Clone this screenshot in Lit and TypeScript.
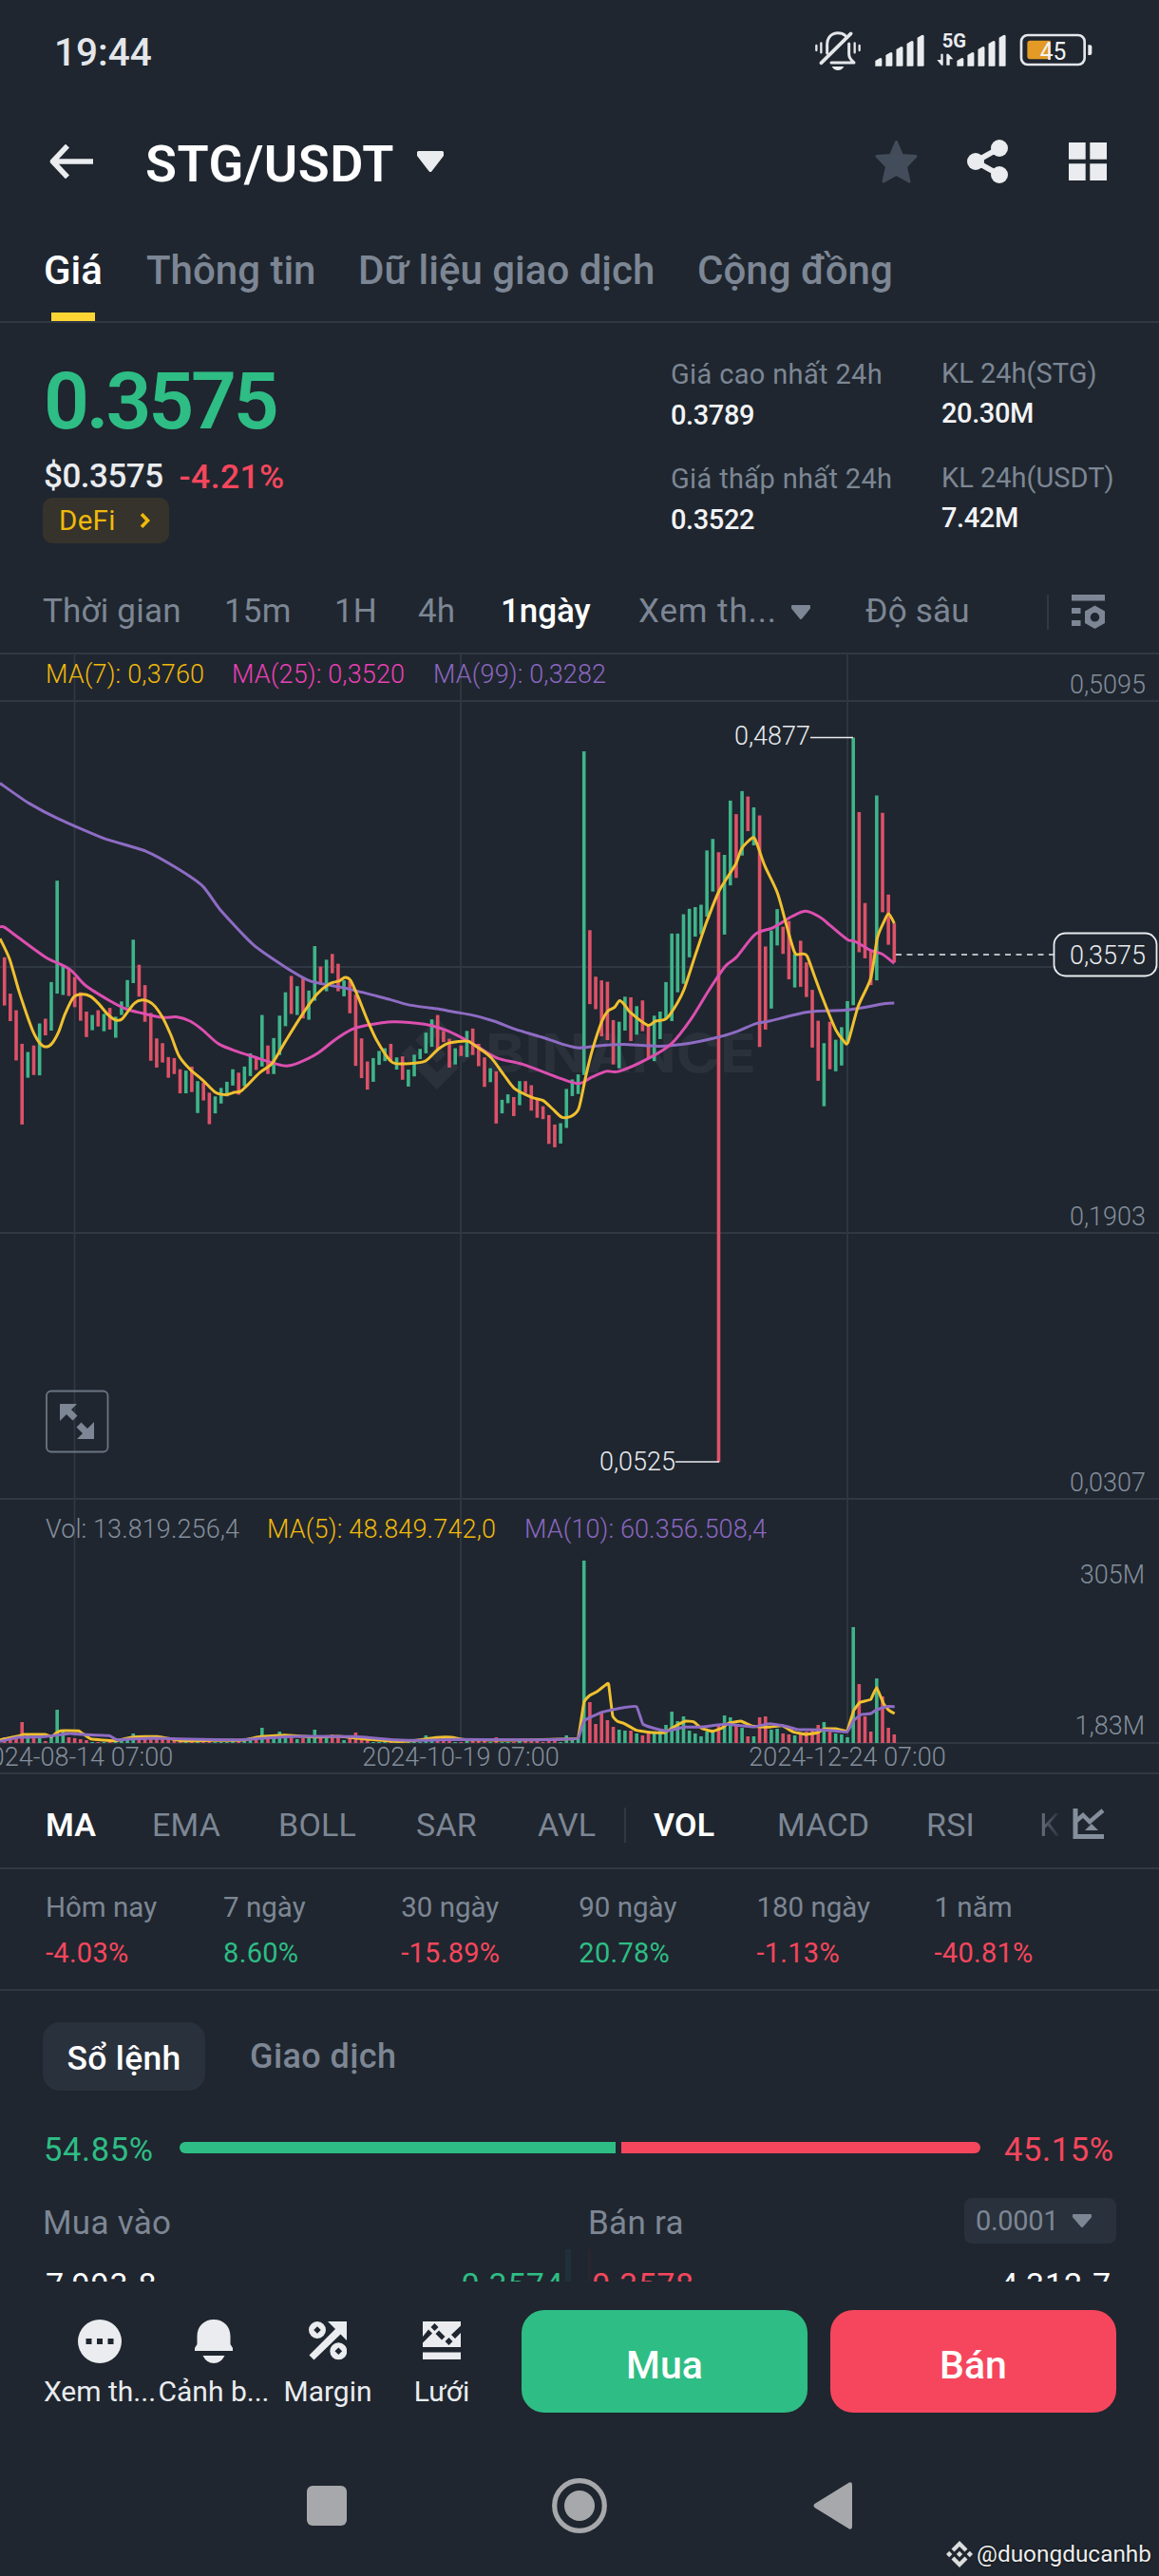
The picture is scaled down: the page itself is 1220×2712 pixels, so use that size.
import { LitElement, html, svg, css } from "lit";
import { customElement } from "lit/decorators.js";
import { classMap } from "lit/directives/class-map.js";

/* ---------- chart data ---------- */

// Price bars: direction, high, low (chart units, 2.8 per pixel from the top of the pane).
const BARS = `R890-1032 R997-1078 R1046-1194 R1145-1383 G1169-1245 R1150-1237 G1085-1238 R1071-1120 G963-1106 G664-997
G915-1001 R925-1004 R948-1037 R993-1077 R1050-1125 G1060-1105 R1046-1094 G1057-1108 R1039-1103 G1065-1127
G1020-1060 G957-1038 G838-966 R912-1006 R972-1080 R1054-1195 R1129-1215 R1143-1200 R1184-1245 R1187-1234
R1220-1291 G1224-1291 R1212-1287 G1255-1349 R1260-1312 R1289-1382 G1300-1350 G1275-1321 G1257-1300 G1220-1268
R1230-1295 G1212-1270 G1173-1240 R1184-1222 G1060-1212 R1150-1234 G1128-1234 G1062-1178 G993-1093 R945-1057
G975-1060 R950-1070 G988-1074 G857-1018 R917-970 G897-990 R880-937 R909-990 G958-1005 R960-1055
R1000-1210 R1129-1246 R1197-1280 G1187-1257 G1166-1207 G1158-1196 R1145-1198 G1185-1221 R1182-1251 G1221-1271
G1177-1241 G1160-1190 G1112-1173 G1073-1154 R1060-1160 R1107-1140 R1130-1215 G1158-1206 R1150-1181 G1107-1184
R1100-1178 R1145-1211 R1185-1272 G1217-1258 R1226-1380 G1310-1350 G1294-1320 R1302-1358 G1255-1326 R1255-1290
R1267-1342 R1305-1363 R1329-1367 R1355-1440 R1383-1450 G1379-1439 G1278-1393 G1250-1299 G1235-1293 G283-1237
R810-1028 R947-1043 R958-1123 R962-1134 R1075-1206 G1080-1217 G1006-1106 R1008-1137 G1034-1118 R1017-1108
R1090-1187 G1062-1196 G1050-1131 G963-1070 G820-1078 G820-993 G763-968 G747-890 G742-829 G735-822
G575-770 G541-696 R580-2378 G588-823 G428-678 R468-656 G400-590 R416-518 G448-560 R472-1154
R858-1103 G811-1041 G748-855 R800-880 R783-955 G880-979 R841-977 R905-1007 R986-1156 R1077-1254
G1143-1329 R1080-1220 G1133-1226 G1096-1209 G1019-1138 G242-1031 R462-875 R730-893 R870-972 G413-958
R464-757 R705-853 R790-905`
  .split(/\s+/)
  .map((s) => {
    const [hi, lo] = s.slice(1).split("-").map(Number);
    return { up: s[0] === "G", hi, lo };
  });

// Volume bar heights in pixels.
const VOLUME = [
  6, 5, 8, 22, 8, 7, 8, 2, 6, 35, 12, 6, 5, 4, 3, 1, 1, 1, 2, 3, 4, 6, 10, 6, 6, 7, 7, 6, 4, 3, 2, 1, 1, 3, 1, 3, 1, 1,
  1, 2, 3, 4, 6, 6, 16, 8, 8, 12, 9, 8, 4, 5, 8, 14, 8, 7, 9, 8, 3, 5, 11, 6, 6, 1, 1, 1, 1, 1, 1, 1, 1, 1, 8, 4, 7, 6,
  5, 1, 1, 3, 3, 3, 3, 1, 6, 1, 1, 1, 3, 2, 3, 2, 1, 3, 3, 1, 8, 5, 5, 192, 43, 20, 33, 24, 17, 14, 13, 13, 10, 8, 10,
  12, 13, 19, 33, 23, 28, 13, 10, 7, 12, 14, 18, 29, 27, 18, 16, 7, 7, 27, 28, 14, 15, 10, 9, 8, 10, 12, 13, 19, 22, 13,
  10, 9, 6, 122, 62, 28, 12, 68, 49, 16, 9,
];

const MA7 =
  "0,835 30,895 60,990 85,1060 105,1110 125,1142 145,1154 165,1143 185,1110 205,1058 232,1008 260,999 285,1005 310,1025 340,1058 365,1075 385,1072 405,1048 425,1025 445,1016 470,1020 490,1035 515,1070 540,1120 565,1180 600,1220 640,1252 680,1288 715,1295 740,1288 760,1285 780,1268 820,1230 860,1202 900,1140 950,1065 1000,1000 1040,968 1070,960 1090,949 1107,958 1130,1005 1160,1075 1190,1135 1235,1197 1270,1204 1310,1202 1345,1195 1385,1160 1420,1142 1475,1137 1500,1150 1550,1185 1590,1235 1625,1277 1680,1303 1715,1312 1745,1337 1775,1362 1805,1358 1828,1335 1850,1240 1870,1165 1900,1080 1920,1048 1940,1038 1957,1018 1975,1033 1990,1052 2045,1090 2070,1078 2105,1070 2140,1023 2160,985 2190,900 2230,790 2268,700 2300,650 2325,612 2343,568 2378,537 2390,555 2415,620 2455,700 2485,800 2510,877 2530,880 2548,885 2570,940 2600,1015 2640,1105 2665,1137 2678,1140 2710,1035 2750,950 2770,835 2790,788 2806,762 2824,790";
const MA25 =
  "0,800 15,802 60,833 145,890 220,925 270,973 350,1020 400,1043 450,1055 510,1067 560,1066 600,1078 640,1104 690,1145 750,1168 800,1183 850,1198 900,1210 940,1202 1000,1175 1060,1132 1110,1103 1150,1092 1240,1080 1340,1087 1400,1102 1440,1118 1500,1148 1570,1187 1650,1205 1770,1247 1828,1262 1870,1243 1915,1226 1955,1226 2050,1187 2120,1145 2180,1075 2240,985 2290,917 2325,890 2385,822 2440,803 2500,770 2545,754 2590,772 2620,795 2675,837 2700,843 2750,870 2785,880 2824,908";
const MA99 =
  "0,377 90,435 185,482 330,540 460,577 560,628 640,680 700,755 800,853 900,918 980,960 1100,983 1230,1014 1290,1030 1380,1042 1440,1052 1490,1060 1560,1078 1630,1103 1710,1125 1780,1147 1830,1157 1890,1151 1970,1147 2080,1152 2180,1143 2270,1125 2330,1108 2385,1086 2430,1078 2540,1053 2600,1048 2670,1046 2740,1036 2790,1027 2824,1025";
const VMA5 =
  "0,605 57,593 76,588 143,588 163,595 182,580 201,576 249,577 287,602 363,608 421,596 497,595 574,608 670,607 765,606 823,595 899,590 995,596 1071,594 1148,602 1243,610 1301,608 1377,598 1425,597 1473,605 1626,606 1798,602 1826,598 1844,487 1862,465 1885,453 1917,428 1922,430 1935,530 1950,547 1970,553 2010,575 2060,582 2100,582 2135,560 2165,546 2190,548 2215,568 2250,578 2280,568 2300,553 2340,546 2375,562 2430,565 2470,560 2505,580 2545,588 2580,583 2605,570 2640,570 2675,576 2695,515 2715,487 2750,477 2768,440 2790,490 2805,510 2825,522";
const VMA10 =
  "0,610 60,597 143,595 220,585 260,588 345,592 370,605 480,600 600,603 760,605 880,597 960,594 1120,595 1250,605 1340,607 1440,604 1700,605 1780,603 1826,600 1844,545 1900,518 1960,505 2010,500 2030,555 2060,567 2105,577 2160,565 2210,565 2290,556 2380,564 2430,554 2480,562 2520,573 2560,573 2620,575 2675,580 2695,545 2720,525 2750,522 2768,510 2800,500 2825,500";

// The chart canvas starts at y = 689 of the page; all its coordinates are page pixels.
const priceY = (v: number) => 690 + v / 2.8;
const volY = (v: number) => 1630 + v / 3;
const barX = (i: number) => 4.7 + i * 6.162;

// Cardinal spline through the points of the series; tension 0 gives straight segments.
function curve(series: string, fy: (v: number) => number, tension: number) {
  const p = series.split(" ").map((s) => {
    const [x, y] = s.split(",").map(Number);
    return [x / 3, fy(y)];
  });
  const f = (n: number) => n.toFixed(1);
  let d = `M${f(p[0][0])} ${f(p[0][1])}`;
  for (let i = 0; i < p.length - 1; i++) {
    const a = p[Math.max(0, i - 1)];
    const b = p[i];
    const c = p[i + 1];
    const e = p[Math.min(p.length - 1, i + 2)];
    d += `C${f(b[0] + (c[0] - a[0]) * tension)} ${f(b[1] + (c[1] - a[1]) * tension)} ${f(c[0] - (e[0] - b[0]) * tension)} ${f(c[1] - (e[1] - b[1]) * tension)} ${f(c[0])} ${f(c[1])}`;
  }
  return d;
}

/* ---------- chart ---------- */

@customElement("price-chart")
class PriceChart extends LitElement {
  static styles = css`
    :host { display: block; height: 1179px; border-bottom: 2px solid #303843; box-sizing: border-box; }
    svg { display: block; }
    text { font-family: Roboto, "Liberation Sans", sans-serif; font-weight: 300; font-size: 27px; fill: #848e9c; }
    .grid { stroke: #303843; stroke-width: 1.8; }
    .up { stroke: #3fb48a; stroke-width: 3.6; }
    .down { stroke: #dd5268; stroke-width: 3.6; }
    .line { fill: none; stroke-width: 3; stroke-linejoin: round; }
    .yellow { stroke: #f0c030; }
    .pink { stroke: #dd4fb0; }
    .violet { stroke: #8e6cc4; }
    .t-yellow { fill: #f0b90b; }
    .t-pink { fill: #eb40b5; }
    .t-violet { fill: #8b66c0; }
    .t-white { fill: #eaecef; }
    .lead { stroke: #eaecef; stroke-width: 1.6; }
    .dash { stroke: #eaecef; stroke-width: 1.5; stroke-dasharray: 6 5.5; }
    .brand { fill: #2a313b; font-family: Inter, Roboto, sans-serif; font-weight: 700; font-size: 57px; }
    .mark { fill: #2a313b; }
    .tag { fill: #1f262f; stroke: #eaecef; stroke-width: 1.8; }
    .expand { fill: none; stroke: #6b7482; stroke-width: 1.8; }
    .arrows { fill: #7d8694; }
  `;
  render() {
    return html`<svg width="1220" height="1177" viewBox="0 689 1220 1177">
      ${[738, 1018, 1298, 1578, 1835].map((y) => svg`<line class="grid" x1="0" x2="1220" y1=${y} y2=${y} />`)}
      ${[78.5, 485, 892].map((x) => svg`<line class="grid" x1=${x} x2=${x} y1="689" y2="1835" />`)}
      <g class="mark">
        <path d="M460 1072l23 23-9 9-14-14-14 14-9-9zM460 1147l-23-23 9-9 14 14 14-14 9 9zM460 1100l9.500 9.500-9.500 9.500-9.500-9.500zM432 1100l9.500 9.500-9.500 9.500-9.500-9.500zM488 1100l9.500 9.500-9.500 9.500-9.500-9.500z" />
      </g>
      <text class="brand" x="511" y="1129" textLength="285" lengthAdjust="spacingAndGlyphs">BINANCE</text>
      ${BARS.map((b, i) => svg`<line class=${b.up ? "up" : "down"} x1=${barX(i)} x2=${barX(i)} y1=${priceY(b.hi)} y2=${priceY(b.lo)} />`)}
      ${VOLUME.map((h, i) => svg`<line class=${BARS[i].up ? "up" : "down"} x1=${barX(i)} x2=${barX(i)} y1=${1835 - h} y2="1835" />`)}
      <path class="line violet" d=${curve(MA99, priceY, 0.1)} />
      <path class="line pink" d=${curve(MA25, priceY, 0.15)} />
      <path class="line yellow" d=${curve(MA7, priceY, 0.13)} />
      <path class="line yellow" d=${curve(VMA5, volY, 0.05)} />
      <path class="line violet" d=${curve(VMA10, volY, 0.05)} />

      <text class="t-yellow" x="48" y="719" textLength="167">MA(7): 0,3760</text>
      <text class="t-pink" x="244" y="719" textLength="182">MA(25): 0,3520</text>
      <text class="t-violet" x="456" y="719" textLength="182">MA(99): 0,3282</text>
      <text x="48" y="1619" textLength="204">Vol: 13.819.256,4</text>
      <text class="t-yellow" x="281" y="1619" textLength="241">MA(5): 48.849.742,0</text>
      <text class="t-violet" x="552" y="1619" textLength="255">MA(10): 60.356.508,4</text>

      <text x="1206" y="730" text-anchor="end">0,5095</text>
      <text x="1206" y="1290" text-anchor="end">0,1903</text>
      <text x="1206" y="1570" text-anchor="end">0,0307</text>
      <text x="1205" y="1667" text-anchor="end">305M</text>
      <text x="1205" y="1826" text-anchor="end">1,83M</text>
      <text x="78.500" y="1859" text-anchor="middle">2024-08-14 07:00</text>
      <text x="485" y="1859" text-anchor="middle">2024-10-19 07:00</text>
      <text x="892" y="1859" text-anchor="middle">2024-12-24 07:00</text>

      <text class="t-white" x="853" y="784" text-anchor="end">0,4877</text>
      <line class="lead" x1="853" x2="898" y1="776.500" y2="776.500" />
      <text class="t-white" x="711" y="1548" text-anchor="end">0,0525</text>
      <line class="lead" x1="711" x2="757" y1="1539" y2="1539" />

      <line class="dash" x1="943" x2="1109" y1="1005" y2="1005" />
      <rect class="tag" x="1109.500" y="982.500" width="108" height="45" rx="12" />
      <text class="t-white" x="1206" y="1015" text-anchor="end">0,3575</text>

      <rect class="expand" x="49" y="1464.500" width="64.500" height="64" rx="5" />
      <g class="arrows">
        <path d="M63 1478h18l-6 6 6.500 6.500-5 5L70 1489l-7 7z" />
        <path d="M99 1515h-18l6-6-6.500-6.500 5-5L92 1504l7-7z" />
      </g>
    </svg>`;
  }
}

/* ---------- page ---------- */

@customElement("app-root")
class AppRoot extends LitElement {
  static styles = css`
    :host {
      display: block; position: relative; width: 1220px; height: 2712px; overflow: hidden;
      background: #1f262f; color: #eaecef;
      font-family: Roboto, "Noto Sans", "Liberation Sans", sans-serif;
    }
    * { box-sizing: border-box; }
    svg { display: block; flex: none; }
    .fg { fill: #eaecef; }
    .muted { color: #7d8694; }
    .green { color: #2ebd85; }
    .red { color: #f6465d; }

    .status { display: flex; align-items: center; justify-content: space-between; height: 100px; padding: 10px 63px 0 57px; }
    .time { font-size: 40.5px; font-weight: 500; color: #e4e6ea; }

    .header { display: flex; align-items: center; height: 140px; padding: 0 55px 0 51px; }
    .title { margin: 5px 0 0 54px; font-size: 54px; font-weight: 600; line-height: 60px; letter-spacing: 0.5px; color: #fff; width: 263px; white-space: nowrap; }
    .caret { margin-left: 23px; }
    .actions { display: flex; align-items: center; margin-left: auto; }
    .share { margin-left: 52px; }
    .apps { margin-left: 64px; }

    .tabs { display: grid; grid-template-columns: 108px 223px 357px auto; height: 100px; padding-left: 46px; border-bottom: 2px solid #303843; }
    .tab { font-size: 42px; line-height: 89px; font-weight: 500; color: #7d8694; white-space: nowrap; height: 98px; }
    .tab.active { color: #fff; }
    .tab.active::after { content: ""; display: block; width: 46px; height: 9px; margin-left: 8px; background: #fcd535; }

    .summary { display: grid; grid-template-columns: 660px 285px auto; height: 250px; padding-left: 46px; }
    .last { padding-top: 35px; }
    .price { font-size: 84px; line-height: 96px; font-weight: 600; letter-spacing: -3.2px; }
    .sub { display: flex; gap: 17px; margin-top: 9px; font-size: 35px; line-height: 44px; font-weight: 500; letter-spacing: -0.5px; }
    .sub .red { font-size: 35.5px; letter-spacing: 0.4px; }
    .badge { display: flex; align-items: center; width: 133px; height: 48px; padding-left: 17px; margin-left: -1px; border-radius: 10px; background: #35332b; color: #f0b90b; font-size: 29.5px; letter-spacing: 0.3px; }
    .badge svg { margin-left: 25px; }
    .stats { padding-top: 34px; font-size: 29px; line-height: 40px; white-space: nowrap; letter-spacing: 0.35px; }
    .stats.right { padding-top: 33px; letter-spacing: 0; }
    .stat { margin-bottom: 27px; }
    .right .stat { margin-bottom: 28px; }
    .stat .v { margin-top: 3px; font-weight: 500; color: #f2f3f5; letter-spacing: -0.4px; }
    .right .stat .v { margin-top: 2px; }

    .periods { display: grid; grid-template-columns: 191px 116px 88px 87px 145px 161px 78px 191px 26px auto; align-items: center; height: 99px; padding: 11px 0 0 45px; border-bottom: 2px solid #303843; font-size: 35px; line-height: 50px; color: #7d8694; white-space: nowrap; letter-spacing: 0.2px; }
    .more { letter-spacing: 0.9px; }
    .on { color: #fff; font-weight: 600; }
    .periods .on { letter-spacing: -0.1px; font-weight: 500; }
    .sep { width: 2px; height: 37px; background: #303843; }

    .indicators { display: grid; grid-template-columns: 112px 133px 145px 128px 91px 31px 130px 157px 119px 35px auto; align-items: center; height: 100px; padding: 8px 0 0 48px; border-bottom: 2px solid #303843; font-size: 34px; line-height: 50px; color: #7d8694; white-space: nowrap; letter-spacing: 0.2px; }
    .fade { width: 20px; overflow: hidden; -webkit-mask-image: linear-gradient(90deg, rgba(0,0,0,.8), rgba(0,0,0,.15)); mask-image: linear-gradient(90deg, rgba(0,0,0,.8), rgba(0,0,0,.15)); }

    .perf { display: grid; grid-template-columns: repeat(6, 187.1px); height: 128px; padding: 20px 0 0 48px; border-bottom: 2px solid #303843; font-size: 29.5px; line-height: 40px; }
    .perf .pv { margin-top: 8px; font-size: 29px; letter-spacing: 0.3px; }

    .book { height: 306px; padding: 33px 45px 0; overflow: hidden; }
    .switch { display: flex; align-items: center; gap: 47px; font-size: 36px; font-weight: 500; line-height: 76px; height: 72px; }
    .switch .muted { letter-spacing: 0.4px; }
    .pill { width: 171px; height: 72px; border-radius: 18px; background: #29313c; color: #fff; text-align: center; font-weight: 500; font-size: 35.5px; letter-spacing: 0.3px; }
    .ratio { display: flex; align-items: center; height: 60px; margin-top: 30px; font-size: 34.5px; letter-spacing: 0.6px; padding: 0 1px; }
    .bars { display: flex; gap: 6px; width: 843px; height: 12px; margin: 0 25px 0 26px; }
    .pct { width: 117px; line-height: 40px; padding-top: 4px; }
    .buy-bar { background: #2ebd85; border-radius: 6px 0 0 6px; }
    .sell-bar { flex: 1; background: #f6465d; border-radius: 0 6px 6px 0; }
    .sides { display: grid; grid-template-columns: 574px 396px 160px; height: 48px; margin-top: 23px; font-size: 35px; line-height: 54px; letter-spacing: 0.3px; }
    .step { display: flex; align-items: center; justify-content: space-between; height: 48px; padding: 0 26px 0 12px; border-radius: 8px; background: #29313c; font-size: 29px; letter-spacing: -0.3px; }
    .orders { display: grid; grid-template-columns: 1fr 1fr; gap: 18px; margin-top: 6px; height: 74px; font-size: 34px; line-height: 74px; letter-spacing: 0.5px; padding: 0 1px; }
    .side { display: flex; justify-content: space-between; padding-left: 2px; }
    .bid { border-right: 6px solid #20303a; padding-right: 2px; }
    .ask { border-left: 3px solid #29262f; padding-left: 1px; padding-right: 4px; }
    .qty { color: #fff; letter-spacing: 0.9px; }

    .actionbar { display: flex; height: 168px; padding: 30px 45px 0; }
    .tool { width: 120px; padding-top: 10px; display: flex; flex-direction: column; align-items: center; }
    .tool span { margin-top: 12px; font-size: 30px; line-height: 36px; white-space: nowrap; }
    .btn { width: 301px; height: 108px; border-radius: 24px; font-size: 41px; line-height: 116px; font-weight: 500; text-align: center; color: #fff; }
    .buy { background: #2ebd85; margin-left: 24px; }
    .sell { background: #f6465d; margin-left: 24px; }

    .sysnav { display: flex; align-items: center; height: 136px; padding-left: 323px; fill: #a7a8ab; }
    .home { margin-left: 216px; }
    .back { margin-left: 217px; }

    .credit { position: absolute; right: 8px; bottom: 7px; display: flex; align-items: center; gap: 4px; font-size: 24.4px; line-height: 32px; color: #eee; text-shadow: 0 0 2px #000; }
  `;

  private caret(w: number, h: number, color: string) {
    return html`<svg width=${w} height=${h} viewBox="0 0 28 22" preserveAspectRatio="none">
      <path fill=${color} d="M1.500 0h25a1.500 1.500 0 0 1 1.500 1.500V5L15.500 21.300a2 2 0 0 1-3 0L0 5V1.500A1.500 1.500 0 0 1 1.500 0z" />
    </svg>`;
  }

  private statusIcons() {
    // Drawn on a grid of three units per pixel.
    const signal = (x: number, step: number) =>
      [0, 1, 2, 3, 4].map((i) => {
        const top = [122, 104, 86, 68, 49][i];
        const l = x + i * step;
        return svg`<path class="fg" d="M${l} 149V${top + 10}L${l + 14} ${top + 2}Q${l + 21} ${top - 1} ${l + 21} ${top + 6}V146Q${l + 21} 149 ${l + 18} 149z" />`;
      });
    return html`<svg width="300" height="50" viewBox="50 30 900 150">
      <g fill="none" stroke="#e4e6ea" stroke-width="9" stroke-linecap="round" stroke-linejoin="round">
        <path d="M91 108V82c0-24 14-38 34-38 10 0 18 3 23 8M160 78v34c0 10 4 16 16 26h-72" />
        <path stroke-width="11" d="M166 46 L72 139" />
        <path stroke-width="7" d="M72 76v30M57 84v15M178 76v30M193 84v15" />
      </g>
      <path class="fg" d="M106 150h38q-6 12-19 12t-19-12z" />
      ${signal(243, 33.2)}
      ${signal(501, 33.2)}
      <g class="fg">
        <text x="454" y="89" font-size="58" font-weight="700" textLength="76" lengthAdjust="spacingAndGlyphs">5G</text>
        <path d="M450 110h7v36h-5l-14-17h12zM469 146h-1V110h6l15 17h-11v19z" />
      </g>
      <rect x="704" y="51" width="200" height="93" rx="20" fill="none" stroke="#e4e6ea" stroke-width="8" />
      <path class="fg" d="M915 82h6q6 0 6 6v20q0 6-6 6h-6z" />
      <path fill="#e39b25" d="M732 68h64v59h-64q-9 0-9-9V77q0-9 9-9z" />
      <text x="763" y="129" fill="#f2f3f5" font-size="75" font-weight="400" textLength="83" lengthAdjust="spacingAndGlyphs">45</text>
    </svg>`;
  }

  private toolIcon(kind: string) {
    switch (kind) {
      case "more":
        return html`<svg width="46" height="46" viewBox="0 0 46 46"><path class="fg" fill-rule="evenodd" d="M23 0a23 23 0 1 1 0 46 23 23 0 0 1 0-46zM8.500 20v6h6v-6zM20 20v6h6v-6zM31.500 20v6h6v-6z" /></svg>`;
      case "bell":
        return html`<svg width="40" height="46" viewBox="0 0 40 46"><path class="fg" d="M20 0C30.500 0 37.500 7.500 37.500 17.500V26L40 30v3H0v-3l2.500-4V17.500C2.500 7.500 9.500 0 20 0zM8.500 38h23q-4 8-11.500 8T8.500 38z" /></svg>`;
      case "margin":
        return html`<svg width="40" height="46" viewBox="0 0 40 46"><g class="fg"><path d="M20 2h20v20l-6.500-6.500L5.500 42.500.500 37.500 28 10z" />
          <path fill-rule="evenodd" d="M9 2a9 9 0 1 1 0 18A9 9 0 0 1 9 2zm0 5.200L5.200 11 9 14.800 12.800 11z" />
          <path fill-rule="evenodd" d="M31.300 24.300a9 9 0 1 1 0 18 9 9 0 0 1 0-18zm0 5.200-3.800 3.800 3.800 3.800 3.800-3.800z" /></g></svg>`;
      default:
        return html`<svg width="40" height="46" viewBox="0 0 40 46"><path class="fg" d="M0 2h40v27H0zM0 34.500h40V42H0z" />
          <g fill="#1f262f"><path d="M12.500 4l4 4-4 4-4-4zM27.500 19l4 4-4 4-4-4zM6 10.500l4 4L0 24.500V18z M17 11.500l6.500 6.500-3.500 3.500-6.500-6.500zM40 6.500v7.500L34 20l-4-4z" /></g></svg>`;
    }
  }

  render() {
    const perf = [
      ["Hôm nay", "-4.03%"], ["7 ngày", "8.60%"], ["30 ngày", "-15.89%"],
      ["90 ngày", "20.78%"], ["180 ngày", "-1.13%"], ["1 năm", "-40.81%"],
    ];
    const tools = [["more", "Xem th..."], ["bell", "Cảnh b..."], ["margin", "Margin"], ["grid", "Lưới"]];
    const stat = (l: string, v: string) => html`<div class="stat"><div class="muted">${l}</div><div class="v">${v}</div></div>`;
    return html`
      <div class="status"><span class="time">19:44</span>${this.statusIcons()}</div>

      <div class="header">
        <svg width="48" height="36" viewBox="0 0 48 36"><path fill="none" stroke="#eaecef" stroke-width="5.500" stroke-linejoin="round" d="M20 1.500L4.500 18L20 34.500M4.500 18H47" /></svg>
        <div class="title">STG/USDT</div>
        <div class="caret">${this.caret(28, 22, "#eaecef")}</div>
        <div class="actions">
          <svg width="45" height="46" viewBox="0 0 45 46"><path fill="#434c5a" stroke="#434c5a" stroke-width="3" stroke-linejoin="round" d="M22.500 2.500l6 14 14.500 1-10.500 11 3.500 15.500-13.500-7.500L9 44l3.500-15.500L2 17.500l14.500-1z" /></svg>
          <svg class="share" width="43" height="46" viewBox="0 0 43 46"><g class="fg"><circle cx="9" cy="23" r="9" /><circle cx="34" cy="9" r="9" /><circle cx="34" cy="37" r="9" /></g><path fill="none" stroke="#eaecef" stroke-width="6" d="M34 9L9 23l25 14" /></svg>
          <svg class="apps" width="40" height="40" viewBox="0 0 40 40"><path class="fg" d="M0 0h17.700v17.700H0zM22.300 0H40v17.700H22.300zM0 22.300h17.700V40H0zM22.300 22.300H40V40H22.300z" /></svg>
        </div>
      </div>

      <div class="tabs">
        ${["Giá", "Thông tin", "Dữ liệu giao dịch", "Cộng đồng"].map((t, i) => html`<div class=${classMap({ tab: true, active: i === 0 })}>${t}</div>`)}
      </div>

      <div class="summary">
        <div class="last">
          <div class="price green">0.3575</div>
          <div class="sub"><span>$0.3575</span><span class="red">-4.21%</span></div>
          <div class="badge">DeFi<svg width="11" height="16" viewBox="0 0 11 16"><path fill="none" stroke="#f0b90b" stroke-width="3.600" d="M2 1.200L8.500 8L2 14.800" /></svg></div>
        </div>
        <div class="stats">${stat("Giá cao nhất 24h", "0.3789")}${stat("Giá thấp nhất 24h", "0.3522")}</div>
        <div class="stats right">${stat("KL 24h(STG)", "20.30M")}${stat("KL 24h(USDT)", "7.42M")}</div>
      </div>

      <div class="periods">
        <span>Thời gian</span><span>15m</span><span>1H</span><span>4h</span><span class="on">1ngày</span><span class="more">Xem th...</span>
        ${this.caret(20, 15, "#7d8694")}
        <span>Độ sâu</span><i class="sep"></i>
        <svg width="36" height="36" viewBox="0 0 36 36" fill="#7d8694"><path d="M0 0h35v6.500H0zM0 14h9.500v6H0zM0 27h9.500v6H0z" /><path fill-rule="evenodd" d="M24.500 11.500l10.500 6v12.500l-10.500 6-10.500-6V17.500zM24.500 19a4.800 4.800 0 1 0 0 9.600 4.800 4.800 0 0 0 0-9.600z" /></svg>
      </div>

      <price-chart></price-chart>

      <div class="indicators">
        <span class="on">MA</span><span>EMA</span><span>BOLL</span><span>SAR</span><span>AVL</span><i class="sep"></i>
        <span class="on">VOL</span><span>MACD</span><span>RSI</span><span class="fade">K</span>
        <svg width="34" height="34" viewBox="0 0 34 34"><path fill="none" stroke="#848e9c" stroke-width="5" d="M3 0V29.500H33" /><path fill="none" stroke="#848e9c" stroke-width="4.500" d="M4 13l7-6 7 7L32 2" /><path fill="#848e9c" d="M20 16l7 7h-14z" /></svg>
      </div>

      <div class="perf">
        ${perf.map(([l, v]) => html`<div><div class="muted">${l}</div><div class=${classMap({ pv: true, red: v[0] === "-", green: v[0] !== "-" })}>${v}</div></div>`)}
      </div>

      <div class="book">
        <div class="switch"><div class="pill">Sổ lệnh</div><div class="muted">Giao dịch</div></div>
        <div class="ratio">
          <span class="pct green">54.85%</span>
          <div class="bars"><div class="buy-bar" style="width:${(54.85 / 100) * 837}px"></div><div class="sell-bar"></div></div>
          <span class="pct red">45.15%</span>
        </div>
        <div class="sides muted"><span>Mua vào</span><span>Bán ra</span><div class="step">0.0001${this.caret(20, 14, "#7d8694")}</div></div>
        <div class="orders">
          <div class="side bid"><span class="qty">7,993.8</span><span class="green">0.3574</span></div>
          <div class="side ask"><span class="red">0.3578</span><span class="qty">4,312.7</span></div>
        </div>
      </div>

      <div class="actionbar">
        ${tools.map(([k, l]) => html`<div class="tool">${this.toolIcon(k)}<span>${l}</span></div>`)}
        <div class="btn buy">Mua</div>
        <div class="btn sell">Bán</div>
      </div>

      <div class="sysnav">
        <svg width="42" height="42" viewBox="0 0 42 42"><rect width="42" height="42" rx="6" /></svg>
        <svg class="home" width="58" height="58" viewBox="0 0 58 58"><circle cx="29" cy="29" r="26.300" fill="none" stroke="#a7a8ab" stroke-width="5.200" /><circle cx="29" cy="29" r="16" /></svg>
        <svg class="back" width="41" height="50" viewBox="0 0 41 50"><path d="M38 .5q3-1 3 2.500v44q0 3.500-3 2.500L1.500 27q-2-2 0-4z" /></svg>
      </div>

      <div class="credit">
        <svg width="28" height="28" viewBox="0 0 28 28" fill="#ddd"><path d="M14 0l8.500 8.500-3 3L14 6l-5.500 5.500-3-3zM14 28l-8.500-8.500 3-3L14 22l5.500-5.500 3 3zM14 10.800l3.200 3.200-3.200 3.200-3.200-3.200zM3.200 10.800L6.400 14l-3.200 3.200L0 14zM24.800 10.800L28 14l-3.200 3.200-3.200-3.200z" /></svg>
        <span>@duongducanhb</span>
      </div>
    `;
  }
}
